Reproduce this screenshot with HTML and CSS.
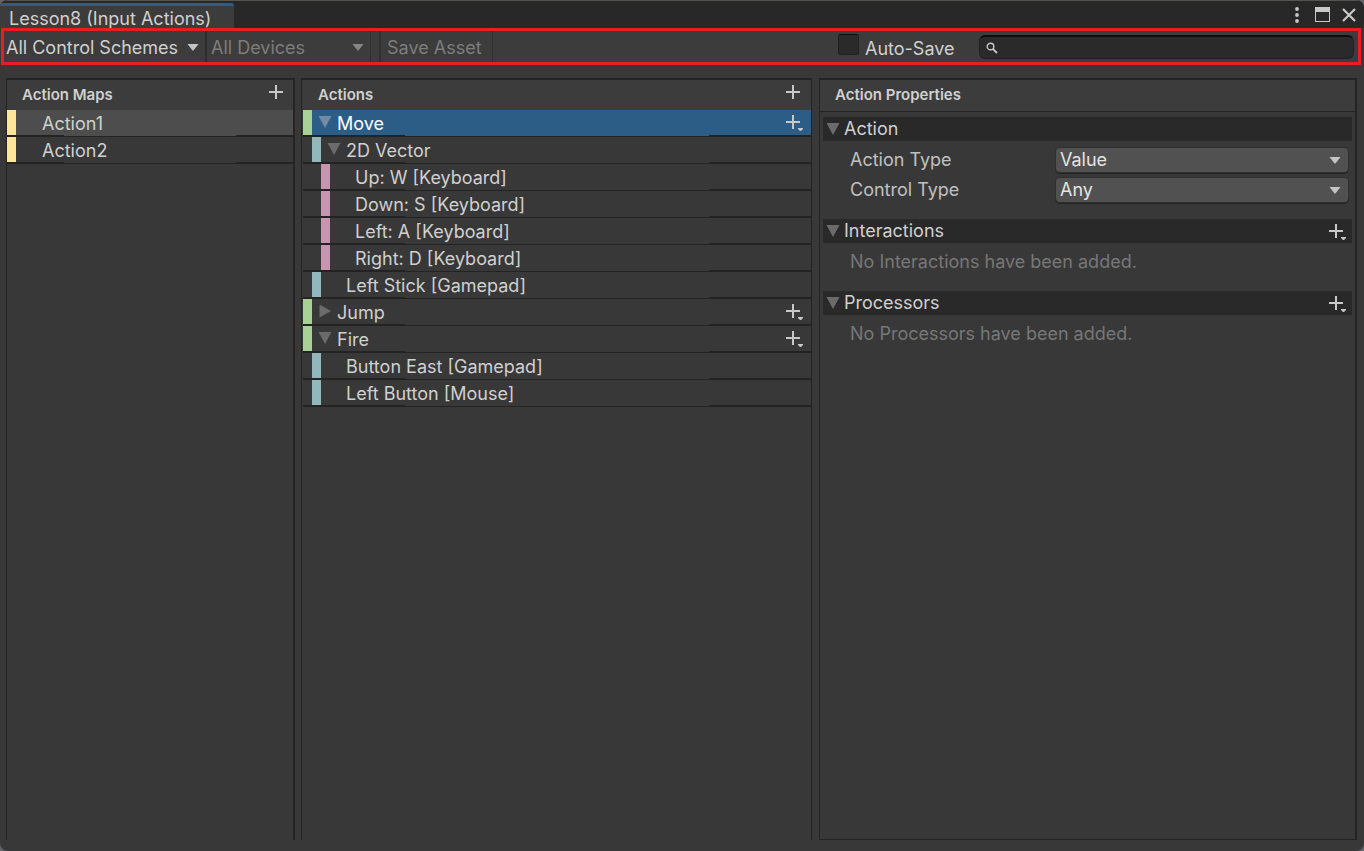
FILE: index.html
```html
<!DOCTYPE html>
<html lang="en">
<head>
<meta charset="utf-8">
<title>Lesson8 (Input Actions)</title>
<link rel="stylesheet" href="styles.css">
</head>
<body>
<svg class="defs" aria-hidden="true">
  <symbol id="plus" viewBox="0 0 20 20"><path d="M9 3h2v6h6v2h-6v6H9v-6H3V9h6z"/></symbol>
  <symbol id="plus-menu" viewBox="0 0 20 20"><path d="M8 2h2v6h6v2h-6v6H8v-6H2V8h6zM14 15h5v1l-2 2h-1l-2-2z"/></symbol>
  <symbol id="down" viewBox="0 0 12 8"><path d="M0.500 1h11L6.500 7.500h-1z"/></symbol>
  <symbol id="fold-open" viewBox="0 0 14 14"><path d="M0.500 1h13L7 13z"/></symbol>
  <symbol id="fold-closed" viewBox="0 0 14 14"><path d="M1.500 0.500L13 7 1.500 13.500z"/></symbol>
</svg>
<div class="window">
  <header class="titlebar">
    <h1 class="tab">Lesson8 (Input Actions)</h1>
    <div class="window-controls">
      <button class="icon-button" aria-label="Menu"><svg width="16" height="16" viewBox="0 0 16 16"><circle cx="8" cy="2" r="1.900"/><circle cx="8" cy="8" r="1.900"/><circle cx="8" cy="14" r="1.900"/></svg></button>
      <button class="icon-button" aria-label="Maximize"><svg width="16" height="16" viewBox="0 0 16 16"><path fill-rule="evenodd" d="M0 0h15v15H0zM1 5h13v9H1z"/></svg></button>
      <button class="icon-button" aria-label="Close"><svg width="16" height="16" viewBox="0 0 16 16"><path d="M2 2l12 12M14 2L2 14" fill="none" stroke="currentColor" stroke-width="2.200"/></svg></button>
    </div>
  </header>

  <div class="toolbar">
    <div class="dropdown schemes">
      <select class="tool-select" aria-label="Control scheme"><option>All Control Schemes</option></select>
      <svg class="caret" width="12" height="8"><use href="#down"/></svg>
    </div>
    <div class="dropdown devices">
      <select class="tool-select" aria-label="Devices" disabled><option>All Devices</option></select>
      <svg class="caret" width="12" height="8"><use href="#down"/></svg>
    </div>
    <button class="save" disabled>Save Asset</button>
    <label class="auto-save"><input class="checkbox" type="checkbox">Auto-Save</label>
    <div class="search">
      <svg width="12" height="12" viewBox="0 0 12 12"><circle cx="4.500" cy="4.500" r="3.300" fill="none" stroke="currentColor" stroke-width="1.400"/><path d="M7 7l4 4" fill="none" stroke="currentColor" stroke-width="1.800"/></svg>
      <input class="search-input" type="search" aria-label="Search">
    </div>
  </div>

  <main class="panels">
    <section class="panel">
      <div class="panel-head"><h2 class="panel-title">Action Maps</h2><button class="icon-button" aria-label="Add action map"><svg width="20" height="20"><use href="#plus"/></svg></button></div>
      <ul class="tree">
        <li class="row active"><span class="mark map"></span><span class="label map-label">Action1</span></li>
        <li class="row"><span class="mark map"></span><span class="label map-label">Action2</span></li>
      </ul>
    </section>

    <section class="panel actions">
      <div class="panel-head"><h2 class="panel-title">Actions</h2><button class="icon-button" aria-label="Add action"><svg width="20" height="20"><use href="#plus"/></svg></button></div>
      <ul class="tree">
        <li class="row selected"><span class="mark action"></span><button class="fold" aria-label="Collapse Move"><svg width="14" height="14"><use href="#fold-open"/></svg></button><span class="label">Move</span><button class="icon-button" aria-label="Add binding"><svg width="20" height="20"><use href="#plus-menu"/></svg></button></li>
        <li class="row level-1"><span class="mark binding"></span><button class="fold" aria-label="Collapse 2D Vector"><svg width="14" height="14"><use href="#fold-open"/></svg></button><span class="label">2D Vector</span></li>
        <li class="row level-2"><span class="mark part"></span><span class="fold"></span><span class="label">Up: W [Keyboard]</span></li>
        <li class="row level-2"><span class="mark part"></span><span class="fold"></span><span class="label">Down: S [Keyboard]</span></li>
        <li class="row level-2"><span class="mark part"></span><span class="fold"></span><span class="label">Left: A [Keyboard]</span></li>
        <li class="row level-2"><span class="mark part"></span><span class="fold"></span><span class="label">Right: D [Keyboard]</span></li>
        <li class="row level-1"><span class="mark binding"></span><span class="fold"></span><span class="label">Left Stick [Gamepad]</span></li>
        <li class="row"><span class="mark action"></span><button class="fold" aria-label="Expand Jump"><svg width="14" height="14"><use href="#fold-closed"/></svg></button><span class="label">Jump</span><button class="icon-button" aria-label="Add binding"><svg width="20" height="20"><use href="#plus-menu"/></svg></button></li>
        <li class="row"><span class="mark action"></span><button class="fold" aria-label="Collapse Fire"><svg width="14" height="14"><use href="#fold-open"/></svg></button><span class="label">Fire</span><button class="icon-button" aria-label="Add binding"><svg width="20" height="20"><use href="#plus-menu"/></svg></button></li>
        <li class="row level-1"><span class="mark binding"></span><span class="fold"></span><span class="label">Button East [Gamepad]</span></li>
        <li class="row level-1"><span class="mark binding"></span><span class="fold"></span><span class="label">Left Button [Mouse]</span></li>
      </ul>
    </section>

    <section class="panel properties">
      <div class="panel-head"><h2 class="panel-title">Action Properties</h2></div>
      <div class="sections">
        <div class="section-head"><button class="section-toggle"><svg width="14" height="14"><use href="#fold-open"/></svg>Action</button></div>
        <div class="section-body">
          <div class="field">
            <label for="action-type">Action Type</label>
            <div class="dropdown"><select class="value-select" id="action-type"><option>Value</option></select><svg class="caret" width="12" height="8"><use href="#down"/></svg></div>
          </div>
          <div class="field">
            <label for="control-type">Control Type</label>
            <div class="dropdown"><select class="value-select" id="control-type"><option>Any</option></select><svg class="caret" width="12" height="8"><use href="#down"/></svg></div>
          </div>
        </div>
        <div class="section-head"><button class="section-toggle"><svg width="14" height="14"><use href="#fold-open"/></svg>Interactions</button><button class="icon-button" aria-label="Add interaction"><svg width="20" height="20"><use href="#plus-menu"/></svg></button></div>
        <div class="section-body"><p class="empty">No Interactions have been added.</p></div>
        <div class="section-head"><button class="section-toggle"><svg width="14" height="14"><use href="#fold-open"/></svg>Processors</button><button class="icon-button" aria-label="Add processor"><svg width="20" height="20"><use href="#plus-menu"/></svg></button></div>
        <div class="section-body"><p class="empty">No Processors have been added.</p></div>
      </div>
    </section>
  </main>
</div>
</body>
</html>
```
FILE: styles.css
```css
* { box-sizing: border-box; }

body {
  margin: 0;
  background: #62646a;
  color: #d0d0d0;
  font: 18px/24px Inter, "Liberation Sans", sans-serif;
}

button, select, input { font: inherit; color: inherit; }
button { padding: 0; border: 0; background: none; }
svg { display: block; flex: none; fill: currentColor; }
.defs { display: none; }

.window {
  display: flex;
  flex-direction: column;
  min-height: 100vh;
  overflow: hidden;
  border-radius: 8px;
  background: #383838;
}

.titlebar {
  display: flex;
  justify-content: space-between;
  height: 28px;
  padding-top: 2px;
  border-top: 1px solid #56534f;
  background: #282828;
}
.tab {
  width: 234px;
  margin: 0;
  padding-left: 9px;
  border-top: 3px solid #2c5d87;
  border-radius: 3px 3px 0 0;
  background: #3c3c3c;
  font-size: 18px;
  font-weight: 400;
  line-height: 26px;
}
.window-controls { display: flex; gap: 10px; padding: 4px 7px 0 0; }
.icon-button { display: flex; color: #c8c8c8; }

.toolbar {
  display: flex;
  align-items: stretch;
  height: 37px;
  margin: 0 3px 0 1px;
  border: 3px solid #ed1c24;
  background: #3c3c3c;
}
.dropdown { display: grid; align-items: center; }
.dropdown > * { grid-area: 1 / 1; }
.dropdown select {
  width: 100%;
  height: 100%;
  margin: 0;
  appearance: none;
  border: 0;
  background: none;
  opacity: 1;
}
.caret { justify-self: end; pointer-events: none; color: #c4c4c4; }
.tool-select { padding: 2px 0 0 2px; }
.schemes { width: 203px; border-right: 2px solid #2e2e2e; }
.schemes .caret { margin-right: 6px; }
.devices { width: 164px; border-right: 1px solid #303030; color: #7d7d7d; }
.devices .tool-select { padding-left: 4px; }
.devices .caret { margin-right: 6px; color: #858585; }
.save {
  width: 114px;
  margin-left: 8px;
  padding: 2px 0 0 6px;
  border-left: 2px solid #303030;
  border-right: 1px solid #303030;
  color: #7d7d7d;
  text-align: left;
}
.auto-save {
  display: flex;
  gap: 6px;
  width: 141px;
  margin-left: auto;
  padding-top: 3px;
  line-height: 30px;
}
.checkbox {
  width: 21px;
  height: 21px;
  margin: 0;
  appearance: none;
  border: 1px solid #212121;
  border-top-color: #0d0d0d;
  border-radius: 3px;
  background: #2a2a2a;
}
.search {
  display: flex;
  align-items: center;
  gap: 6px;
  width: 375px;
  height: 24px;
  margin: 4px 4px 0 0;
  padding-left: 6px;
  border: 1px solid #212121;
  border-top: 2px solid #0d0d0d;
  border-radius: 6px;
  background: #2a2a2a;
  color: #c8c8c8;
}
.search-input {
  flex: 1;
  min-width: 0;
  height: 20px;
  padding: 0;
  appearance: none;
  border: 0;
  outline: 0;
  background: none;
}

.panels {
  flex: 1;
  display: grid;
  grid-template-columns: 289fr 511fr 539fr;
  gap: 6px;
  padding: 13px 7px 11px 6px;
}
.panel {
  min-width: 0;
  border: 1px solid #242424;
  border-width: 2px 2px 0 1px;
}
.actions { padding-left: 1px; border-right-width: 1px; }
.properties { margin-left: 1px; border-bottom-width: 1px; }
.panel-head {
  display: flex;
  justify-content: space-between;
  height: 30px;
  padding: 2px 7px 0 15px;
  background: #3c3c3c;
}
.actions .panel-head { padding-right: 8px; }
.properties .panel-head { height: 32px; border-bottom: 1px solid #242424; }
.panel-title { margin: 0; font-size: 15px; font-weight: 600; line-height: 26px; }

.tree { margin: 0; padding: 0; list-style: none; }
.row {
  display: flex;
  height: 27px;
  padding-bottom: 1px;
  border-bottom: 1px solid #232323;
  background: linear-gradient(90deg, #232323 20%, transparent 20% 80%, #232323 80%) bottom / 100% 1px no-repeat;
  background-origin: padding-box;
}
.row.active { background-color: #4d4d4d; }
.row.selected { background-color: #2c5d87; color: #fff; }
.level-1 { padding-left: 9px; }
.level-2 { padding-left: 18px; }
.mark { width: 9px; }
.map { background: #ffe597; }
.action { background: #a8d196; }
.binding { background: #93b8bc; }
.part { background: #c895b0; }
.fold { width: 25px; padding: 0 0 0 6px; color: #6b6b6b; }
.fold svg { margin-bottom: 2px; }
.selected .fold { color: #718ba2; }
.label { flex: 1; padding-top: 2px; }
.map-label { padding-left: 26px; }
.row .icon-button { padding: 3px 7px 0 0; }

.sections { padding: 5px 3px; }
.section-head {
  display: flex;
  justify-content: space-between;
  height: 24px;
  padding: 0 5px 0 3px;
  background: #292929;
}
.section-head .icon-button { padding-top: 3px; }
.section-toggle { display: flex; align-items: center; gap: 4px; line-height: 26px; }
.section-toggle svg { color: #6b6b6b; }
.section-body { display: grid; gap: 6px; padding: 7px 4px 17px 27px; color: #c0c0c0; }
.field { display: grid; grid-template-columns: 206px 1fr; height: 24px; }
.field .dropdown { border-radius: 4px; background: #515151; box-shadow: 0 0 0 1px #303030, 0 1px 0 1px #242424; color: #e4e4e4; }
.value-select { padding: 0 0 0 4px; }
.field .caret { margin-right: 7px; }
.empty { margin: 0; color: #777; }
```
